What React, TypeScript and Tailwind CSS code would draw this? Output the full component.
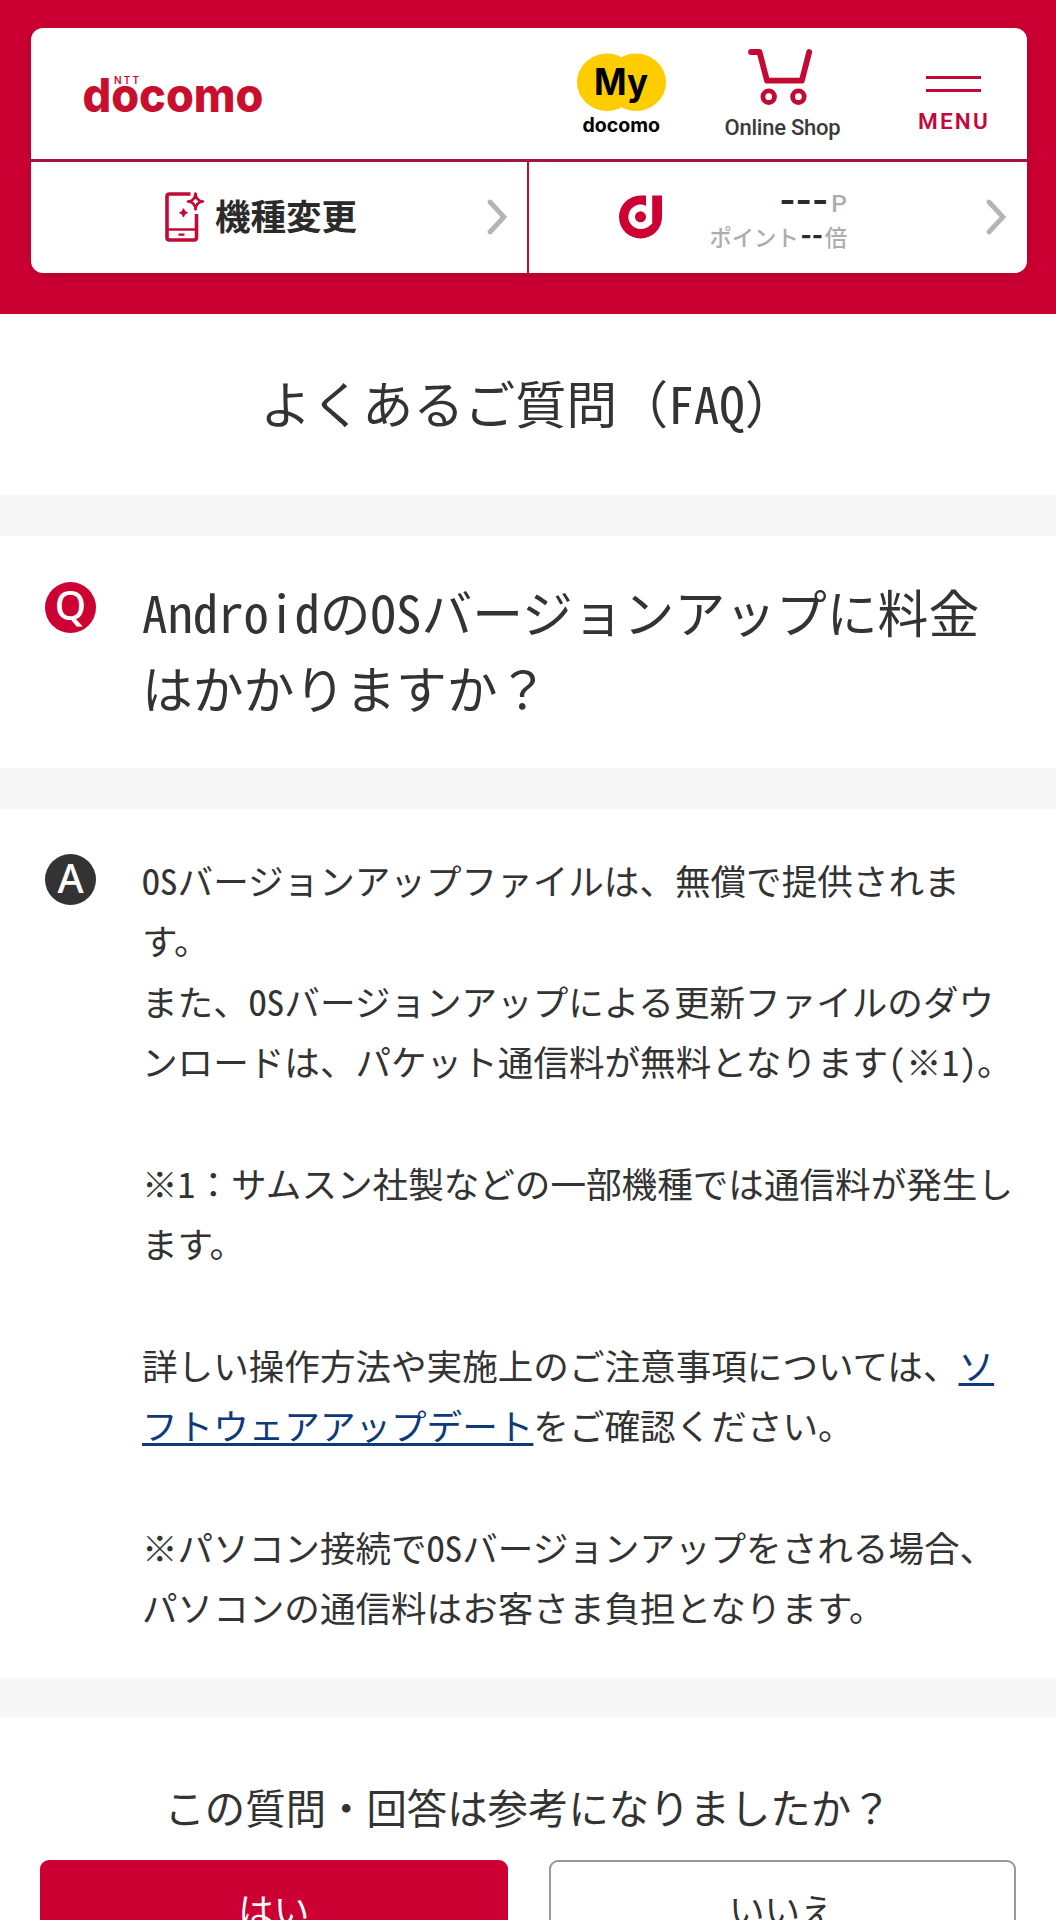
import type { ReactNode } from "react"

import clsx from "clsx"

const PhoneIcon = () => (
  <svg
    width="41"
    height="52"
    viewBox="0 0 41 52"
    fill="none"
    stroke="#c20a35"
    strokeWidth="3.6"
  >
    <path d="M26.5 3H5.5Q3 3 3 5.5V46.5Q3 49 5.5 49H30Q32.5 49 32.5 46.5V23" />
    <path d="M3 38.5H32.5" strokeWidth="2.4" />
    <path d="M14.5 43.7H20.5" strokeWidth="2.2" />
    <path
      d="M31.5 2.5Q32 10 39 10.5Q32 11 31.5 18.5Q31 11 24 10.5Q31 10 31.5 2.5Z"
      strokeWidth="2.6"
      strokeLinejoin="round"
    />
    <path
      d="M19.5 17.5Q20 21.3 23.5 21.7Q20 22 19.5 26Q19 22 15.5 21.7Q19 21.3 19.5 17.5Z"
      fill="#c20a35"
      strokeWidth="1.4"
    />
  </svg>
)

const CartIcon = () => (
  <svg width="68" height="60" viewBox="0 0 68 60" fill="none" stroke="#c20a35">
    <path
      d="M5 6H13.5L21 34.7H55.8L63.2 6"
      strokeWidth="5.8"
      strokeLinecap="round"
      strokeLinejoin="round"
    />
    <circle cx="22.7" cy="50.7" r="5.8" strokeWidth="4.8" />
    <circle cx="52.4" cy="50.7" r="5.8" strokeWidth="4.8" />
  </svg>
)

const DPointIcon = () => (
  <svg width="44" height="44" viewBox="0 0 44 44">
    <path d="M21.5 0.5H43V22A21.5 21.5 0 1 1 21.5 0.5Z" fill="#cc0033" />
    <path
      d="M27 0H33.2V28.5Q28 34 21.5 34A12.2 12.2 0 1 1 27 10.9Z"
      fill="#fff"
    />
    <circle cx="21.5" cy="21.8" r="5.5" fill="#cc0033" />
  </svg>
)

const Chevron = () => (
  <svg
    width="20"
    height="36"
    viewBox="0 0 20 36"
    fill="none"
    stroke="#b4b4b4"
    strokeWidth="4.8"
    strokeLinecap="round"
  >
    <path d="M3 3L17 18L3 33" />
  </svg>
)

const DocomoLogo = () => (
  <svg
    width="190"
    height="56"
    viewBox="0 0 190 56"
    fill="#c8102e"
    className="font-['Inter',sans-serif]"
  >
    <text
      x="0.5"
      y="40"
      fontSize="47"
      fontWeight="800"
      textLength="181"
      lengthAdjust="spacingAndGlyphs"
    >
      docomo
    </text>
    <text x="32" y="11.5" fontSize="10" fontWeight="600" textLength="25">
      NTT
    </text>
  </svg>
)

const MyDocomoLogo = () => (
  <svg
    width="92"
    height="90"
    viewBox="0 0 92 90"
    className="font-['Inter',sans-serif]"
  >
    <ellipse cx="31" cy="29.3" rx="30" ry="28.7" fill="#ffcc00" />
    <ellipse cx="60" cy="29.3" rx="30" ry="28.7" fill="#ffcc00" />
    <text
      x="18"
      y="42"
      fontSize="37"
      fontWeight="700"
      textLength="54"
      lengthAdjust="spacingAndGlyphs"
    >
      My
    </text>
    <text
      x="6.5"
      y="78.8"
      fontSize="19.5"
      fontWeight="700"
      textLength="77.5"
      lengthAdjust="spacingAndGlyphs"
    >
      docomo
    </text>
  </svg>
)

const Header = () => (
  <header className="h-[314px] bg-[#cc0033] pt-7 pr-[29px] pl-[31px]">
    <div className="h-[245px] overflow-hidden rounded-[12px] bg-white shadow-[0_3px_16px_rgba(0,0,0,0.12)]">
      <div className="flex h-[134px] items-start border-b-3 border-[#a5143c]">
        <div className="mt-11 ml-[51px]">
          <DocomoLogo />
        </div>
        <div className="mt-[25px] ml-[304px]">
          <MyDocomoLogo />
        </div>
        <div className="mt-[18px] ml-[49px] flex w-[130px] flex-col items-center">
          <div className="pr-[4px]">
            <CartIcon />
          </div>
          <span className="mt-[9.5px] pl-px font-['Roboto',sans-serif] text-[22px] leading-6 font-medium tracking-[-0.25px] whitespace-nowrap text-[#3a3a3a]">
            Online Shop
          </span>
        </div>
        <div className="mt-12 ml-[66px] flex w-[80px] flex-col items-center text-[#c3093a]">
          <span className="h-[3px] w-[55px] bg-current" />
          <span className="mt-[10px] h-[3px] w-[55px] bg-current" />
          <span className="mt-[17px] pl-[2px] font-['Roboto',sans-serif] text-[22.5px] leading-6 font-semibold tracking-[2.2px]">
            MENU
          </span>
        </div>
      </div>
      <div className="flex h-[111px] pb-[2px]">
        <div className="-mb-[2px] flex w-[498px] items-center border-r-2 border-[#c3093a] pb-[2px]">
          <div className="ml-[133px]">
            <PhoneIcon />
          </div>
          <span className="ml-[10px] pb-[4px] text-[35.5px] leading-10 font-bold text-[#2b2b2b]">
            機種変更
          </span>
          <div className="ml-auto pr-[20px]">
            <Chevron />
          </div>
        </div>
        <div className="flex flex-1 items-center">
          <div className="ml-[90px]">
            <DPointIcon />
          </div>
          <div className="ml-[46px] flex w-[138px] flex-col items-end pt-[3px] text-[22.3px] font-medium text-[#adadad]">
            <div className="flex h-[36px] items-center gap-[3px]">
              <span className="pb-[2px] font-['Inter',sans-serif] text-[35px] leading-[34px] font-bold text-[#2b2b2b]">
                ---
              </span>
              <span className="pt-[8px] font-['Roboto',sans-serif] text-[24.5px] leading-7">
                P
              </span>
            </div>
            <div className="flex h-[36px] items-center leading-[36px]">
              ポイント
              <span className="w-[26px] text-center font-['Inter',sans-serif] text-[24px] font-extrabold text-[#2b2b2b]">
                --
              </span>
              倍
            </div>
          </div>
          <div className="ml-auto pr-[21px]">
            <Chevron />
          </div>
        </div>
      </div>
    </div>
  </header>
)

// half-width Latin glyphs, two to one kana
const Half = ({ children }: { children: ReactNode }) => (
  <span className="[font-feature-settings:'hwid']">{children}</span>
)

const Badge = ({
  className,
  children,
}: {
  className: string
  children: ReactNode
}) => (
  <div
    className={clsx(
      "flex size-[51px] shrink-0 items-center justify-center rounded-full pb-[4px] font-['Noto_Sans',sans-serif] text-[40px] leading-none font-medium text-white",
      className
    )}
  >
    {children}
  </div>
)

const Question = () => (
  <section className="flex h-[231.5px] pt-[38px] pl-[45px]">
    <Badge className="mt-[7.5px] bg-[#cc0033]">Q</Badge>
    <h2 className="ml-[46px] w-[860px] text-[50.8px] leading-[75.5px]">
      <Half>Android</Half>の<Half>OS</Half>
      バージョンアップに料金はかかりますか？
    </h2>
  </section>
)

const Answer = () => (
  <section className="flex h-[869px] pt-[41px] pl-[45px]">
    <Badge className="mt-[4.5px] bg-[#333333]">A</Badge>
    <p className="ml-[46px] w-[885px] text-[35.6px] leading-[60.66px]">
      <Half>OS</Half>
      バージョンアップファイルは、無償で提供されます。
      <br />
      また、<Half>OS</Half>
      バージョンアップによる更新ファイルのダウンロードは、パケット通信料が無料となります
      <Half>(</Half>※<Half>1)</Half>。
      <br />
      <br />※<Half>1</Half>
      ：サムスン社製などの一部機種では通信料が発生します。
      <br />
      <br />
      詳しい操作方法や実施上のご注意事項については、
      <a
        href="#"
        className="text-[#0f3a7a] underline decoration-[2.5px] underline-offset-[3px] [text-decoration-skip-ink:none]"
      >
        ソフトウェアアップデート
      </a>
      をご確認ください。
      <br />
      <br />
      ※パソコン接続で<Half>OS</Half>バージョンアップをされる場合、
      <br />
      パソコンの通信料はお客さま負担となります。
    </p>
  </section>
)

const Feedback = () => (
  <section className="pt-[60px]">
    <p className="text-center text-[40.4px] leading-[60px]">
      この質問・回答は参考になりましたか？
    </p>
    <div className="mt-[22.5px] flex gap-[41px] pl-[40px] text-[35.6px] leading-[48px]">
      <button className="h-[104px] w-[467.5px] rounded-[9px] bg-[#cc0033] pb-[6px] text-white">
        はい
      </button>
      <button className="h-[104px] w-[467.5px] rounded-[9px] border-2 border-[#999999] bg-white pb-[6px]">
        いいえ
      </button>
    </div>
  </section>
)

export default function App() {
  return (
    <main
      lang="ja"
      className="h-[1920px] w-[1056px] overflow-hidden bg-white font-['Noto_Sans_CJK_JP',sans-serif] text-[#333333]"
    >
      <Header />
      <h1 className="h-[181px] pt-[50px] text-center text-[51px] leading-[76px]">
        よくあるご質問（<Half>FAQ</Half>）
      </h1>
      <div className="h-[41px] bg-[#f7f7f7]" />
      <Question />
      <div className="h-[41px] bg-[#f7f7f7]" />
      <Answer />
      <div className="h-[39.5px] bg-[#f7f7f7]" />
      <Feedback />
    </main>
  )
}
